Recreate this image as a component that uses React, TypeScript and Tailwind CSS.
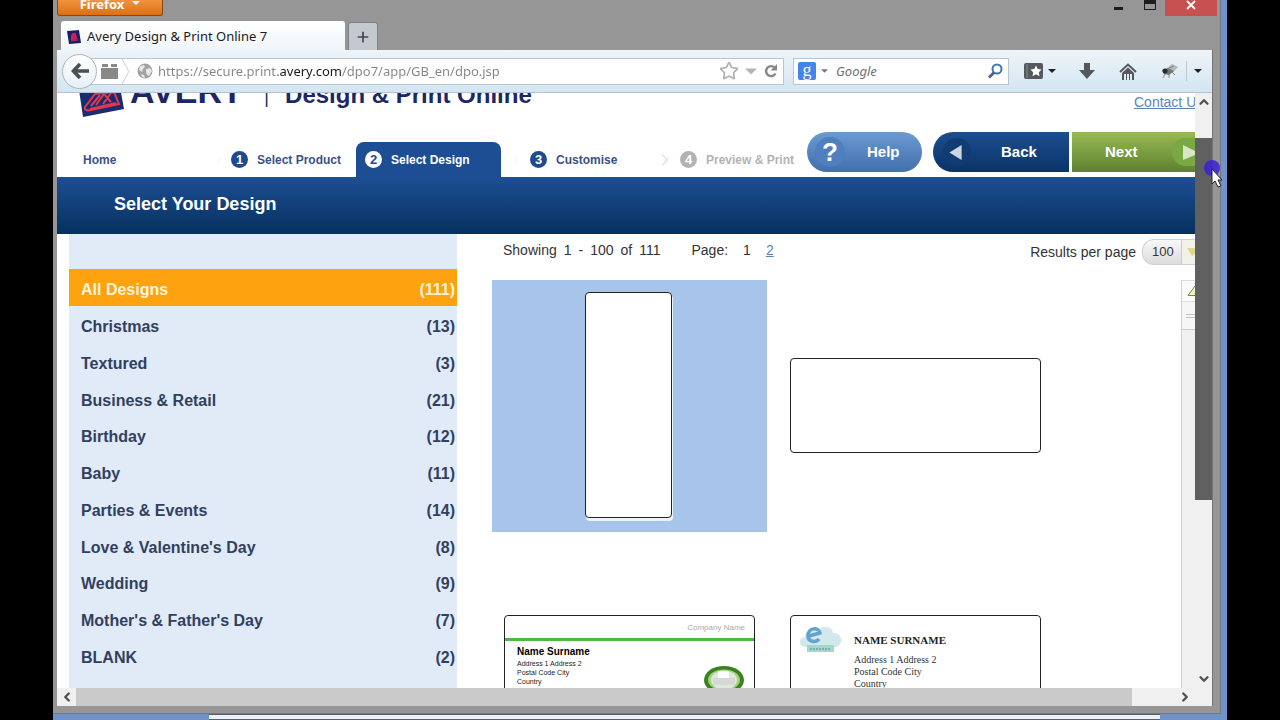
import { ChevronDown, ChevronLeft, ChevronRight, ChevronUp, Plus, Star } from "lucide-react";

const categories = [
  { name: "All Designs", count: 111 },
  { name: "Christmas", count: 13 },
  { name: "Textured", count: 3 },
  { name: "Business & Retail", count: 21 },
  { name: "Birthday", count: 12 },
  { name: "Baby", count: 11 },
  { name: "Parties & Events", count: 14 },
  { name: "Love & Valentine's Day", count: 8 },
  { name: "Wedding", count: 9 },
  { name: "Mother's & Father's Day", count: 7 },
  { name: "BLANK", count: 2 },
];

function Triangle({ className }: { className: string }) {
  return (
    <svg viewBox="0 0 8 4" className={className} fill="currentColor">
      <path d="M0 0h8L4 4z" />
    </svg>
  );
}

function TitleBar() {
  return (
    <div className="-mr-1 flex h-[21px] shrink-0 items-start justify-between">
      <button className="flex h-4 w-[106px] items-end justify-center gap-2 rounded-b-[3px] border border-t-0 border-[#8a4a10] bg-gradient-to-b from-[#ef9440] to-[#dd6f10] pb-[2px] text-white">
        <span className="text-[13px] leading-[18px] font-bold">Firefox</span>
        <Triangle className="mb-2 h-1 w-2" />
      </button>
      <div className="flex items-start">
        <button aria-label="Minimise" className="flex h-4 w-[31px] items-end justify-center pb-[6px]">
          <span className="h-[3px] w-[9px] bg-[#1d1d1d]" />
        </button>
        <button aria-label="Maximise" className="flex h-4 w-[31px] items-start justify-center">
          <span className="h-[10px] w-3 border border-t-4 border-[#1d1d1d]" />
        </button>
        <button aria-label="Close" className="flex h-4 w-[52px] items-start justify-center bg-[#c75050]">
          <svg viewBox="0 0 10 10" className="h-[10px] w-[10px]" stroke="#fff" strokeWidth="1.8">
            <path d="M1 1l8 8M9 1l-8 8" />
          </svg>
        </button>
      </div>
    </div>
  );
}

function TabStrip() {
  return (
    <div className="flex h-[29px] shrink-0 items-end gap-[3px] pl-1">
      <button className="flex h-full w-[284px] items-center gap-[5px] rounded-t-[3px] bg-gradient-to-b from-white to-[#eff5f9] px-[5px] pt-[2px] text-[13px] text-[#1b1b1b]">
        <svg viewBox="0 0 16 16" className="h-4 w-4">
          <path d="M1 2l12-1 2 13-12 1z" fill="#1b1f6b" />
          <path d="M5 11l1-6 3-1 2 6zM5 12l7-1" fill="#c3274f" stroke="#c3274f" />
        </svg>
        Avery Design &amp; Print Online 7
      </button>
      <button aria-label="New tab" className="flex h-7 w-[30px] items-center justify-center rounded-t-[3px] border border-b-0 border-[#7d8187] bg-[#c3c9cf] text-[#3f454c]">
        <Plus size={16} strokeWidth={2.5} />
      </button>
    </div>
  );
}

function Toolbar() {
  return (
    <div className="flex h-[43px] shrink-0 items-center border-b border-[#b6c2cc] bg-gradient-to-b from-[#eef4f8] to-[#d3e6f3] pl-[5px]">
      <button aria-label="Back" className="z-10 flex h-[35px] w-[35px] shrink-0 items-center justify-center rounded-full border border-[#a9b4bd] bg-gradient-to-b from-white to-[#e6f0f7]">
        <svg viewBox="0 0 18 16" className="h-4 w-[18px]" fill="none" stroke="#4b4e52" strokeWidth="3.6">
          <path d="M9 1L2.500 8L9 15M3 8h15" />
        </svg>
      </button>
      <div className="-ml-2 flex h-[27px] min-w-0 flex-1 items-center border border-[#b9c5d0] bg-white pl-[11px]">
        <svg viewBox="0 0 17 15" className="h-[15px] w-[17px] shrink-0" fill="#888">
          <path d="M1 0h6v3H1zM10 0h6v3h-6zM0 4h17v11H0z" />
        </svg>
        <svg viewBox="0 0 9 26" className="ml-[3px] h-[25px] w-[9px] shrink-0" fill="none" stroke="#c9cdd1">
          <path d="M1 0l7 13-7 13" />
        </svg>
        <svg viewBox="0 0 16 16" className="ml-[7px] h-4 w-4 shrink-0">
          <circle cx="8" cy="8" r="7.500" fill="#a2a2a2" />
          <path d="M3 3l4-1 1 2-2 2-1 3-3-2zM9 6l4-1 2 3-3 5-2-1-1-3zM4 11l3 1 1 3-3-1z" fill="#e6e6e6" />
        </svg>
        <input
          aria-label="Address"
          defaultValue="https://secure.print.avery.com/dpo7/app/GB_en/dpo.jsp"
          className="ml-[5px] min-w-0 flex-1 bg-[linear-gradient(90deg,#858585_120px,#1a1a1a_120px,#1a1a1a_184px,#858585_184px)] bg-clip-text pt-[2px] text-[13px] text-transparent outline-none"
        />
        <button aria-label="Bookmark" className="text-[#b0b0b0]">
          <Star size={20} strokeWidth={2} />
        </button>
        <button aria-label="History" className="ml-[6px] text-[#b5b5b5]">
          <Triangle className="h-[7px] w-3" />
        </button>
        <button aria-label="Reload" className="mr-[5px] ml-[7px]">
          <svg viewBox="0 0 14 14" className="h-[14px] w-[14px]" fill="none" stroke="#888" strokeWidth="2.400">
            <path d="M10.500 3.500A5 5 0 1 0 11.500 9.500" />
            <path d="M13 0v6.500H6.500z" fill="#888" stroke="none" />
          </svg>
        </button>
      </div>
      <div className="ml-[9px] flex h-[27px] w-[216px] shrink-0 items-center border border-[#b9c5d0] bg-white pr-[5px] pl-1">
        <span className="flex h-[18px] w-[18px] items-center justify-center rounded-[2px] bg-[#4484ee] pb-[3px] font-['Liberation_Serif',serif] text-[18px] leading-none text-white">g</span>
        <Triangle className="ml-[5px] h-1 w-[7px] text-[#777]" />
        <input aria-label="Search" placeholder="Google" className="ml-2 min-w-0 flex-1 pt-[2px] text-[13px] italic outline-none placeholder:text-[#707070]" />
        <button aria-label="Go">
          <svg viewBox="0 0 16 16" className="h-4 w-4" fill="none">
            <circle cx="10" cy="6" r="4.500" stroke="#3f78ad" strokeWidth="2" />
            <path d="M7 9.500L2 14.500" stroke="#4f6480" strokeWidth="3" />
          </svg>
        </button>
      </div>
      <div className="flex shrink-0 items-center pl-[15px] text-[#54585c]">
        <button aria-label="Bookmarks" className="flex items-center gap-[5px]">
          <svg viewBox="0 0 19 16" className="h-4 w-[19px]">
            <rect width="19" height="16" rx="2" fill="#55595e" />
            <path d="M3 1v14" stroke="#8b8f93" />
            <path d="M12 2.500l1.700 3.600 3.900.5-2.800 2.700.7 3.900-3.500-1.900-3.500 1.900.7-3.900L6.400 6.600l3.900-.5z" fill="#fff" />
          </svg>
          <Triangle className="h-1 w-2 text-[#222]" />
        </button>
        <button aria-label="Downloads" className="ml-[23px]">
          <svg viewBox="0 0 16 16" className="h-4 w-4" fill="currentColor">
            <path d="M5 0h6v7h5l-8 9-8-9h5z" />
          </svg>
        </button>
        <button aria-label="Home page" className="ml-6">
          <svg viewBox="0 0 18 17" className="h-[17px] w-[18px]">
            <path d="M1 9l8-7.500L17 9" fill="none" stroke="#54585c" strokeWidth="2" />
            <path d="M3 10l6-5.500 6 5.500v7h-2v-6h-2v6h-1v-6H8v6H7v-6H5v6H3z" fill="#54585c" />
          </svg>
        </button>
        <button aria-label="Add-on" className="ml-6">
          <svg viewBox="0 0 17 14" className="h-[14px] w-[17px]">
            <path d="M4 6l7-6 6 3-5 5z" fill="#b3b8b6" />
            <path d="M1 6l6-2 6 3-5 4-5-1z" fill="#747875" />
            <circle cx="4" cy="7" r="2.500" fill="#292b2c" />
            <path d="M4 10l-2 4M8 10v4M11 8l3 3M8 4l5-2" stroke="#777" strokeWidth=".8" />
          </svg>
        </button>
        <button aria-label="More" className="mr-[10px] ml-2 flex h-5 items-center border-l border-[#bccad5] pl-[7px]">
          <Triangle className="h-1 w-2 text-[#222]" />
        </button>
      </div>
    </div>
  );
}

function SiteHeader() {
  return (
    <header className="-mt-[17px] flex h-14 items-start pl-5">
      <svg viewBox="0 0 48 41" className="h-[41px] w-12">
        <path d="M0 0h41l6 33-41 8z" fill="#1b2b70" />
        <path d="M8 31l10-13 19-2 5 12-28 6c-4 1-7 0-6-3zM14 30l9-11M19 29l8-11 7 8M13 33l26-6M26 28l8-11" fill="none" stroke="#e2384d" strokeWidth="2" />
      </svg>
      <div className="flex items-baseline pl-[5px] font-bold text-[#1d2768]">
        <span className="text-[34px] leading-[30px]">AVERY</span>
        <span className="ml-[21px] text-lg leading-[30px] font-normal">|</span>
        <span className="ml-4 text-2xl leading-[30px]">Design &amp; Print Online</span>
      </div>
      <a href="#contact" className="mt-4 ml-auto w-[61px] overflow-hidden text-sm leading-5 whitespace-nowrap text-[#5b86b8] underline">
        Contact Us
      </a>
    </header>
  );
}

function StepNumber({ n, className }: { n: number; className: string }) {
  return (
    <span className={`flex h-[17px] w-[17px] items-center justify-center rounded-full text-[13px] leading-none ${className}`}>{n}</span>
  );
}

function Steps() {
  return (
    <div className="flex h-[45px] items-start pl-[26px]">
      <nav className="mt-[10px] flex h-[35px] flex-1 items-center text-xs font-bold whitespace-nowrap text-[#3b5185]">
        <a href="#home" className="w-[130px]">Home</a>
        <ChevronRight size={12} strokeWidth={1} className="text-[#dcdcdc]" />
        <a href="#product" className="ml-[6px] flex w-[125px] items-center gap-[9px]">
          <StepNumber n={1} className="bg-[#1f4b8e] text-white" />
          Select Product
        </a>
        <a href="#design" className="flex h-full w-[145px] items-center gap-[9px] rounded-t-lg bg-[#1d4e93] pl-[9px] text-white">
          <StepNumber n={2} className="bg-white text-[#1d4e93]" />
          Select Design
        </a>
        <ChevronRight size={12} strokeWidth={1} className="ml-[9px] text-[#e4e4e4]" />
        <a href="#customise" className="ml-2 flex w-[129px] items-center gap-[9px]">
          <StepNumber n={3} className="bg-[#1f4b8e] text-white" />
          Customise
        </a>
        <ChevronRight size={20} strokeWidth={1} className="-ml-1 text-[#b5b5b5]" />
        <a href="#preview" className="ml-[5px] flex items-center gap-[9px] text-[#b3b3b3]">
          <StepNumber n={4} className="bg-[#b3b3b3] text-white" />
          Preview &amp; Print
        </a>
      </nav>
      <div className="flex h-10 text-[15px] font-bold text-white">
        <button className="flex w-[115px] items-center rounded-full bg-gradient-to-b from-[#6c9ad0] to-[#426fae] pl-2">
          <span className="flex h-[30px] w-[30px] items-center justify-center rounded-full bg-[#4f7fbf] text-[26px] leading-none">?</span>
          <span className="ml-[22px]">Help</span>
        </button>
        <button className="ml-[11px] flex w-[136px] items-center rounded-l-full bg-gradient-to-b from-[#1c4e90] to-[#093468] pl-[10px]">
          <span className="flex h-7 w-7 items-center justify-center rounded-full bg-[#103c73]">
            <svg viewBox="0 0 13 16" className="mr-2 ml-1 h-[15px] w-[13px]">
              <path d="M0 8L13 0v16z" fill="#ccd5df" />
            </svg>
          </span>
          <span className="ml-[30px]">Back</span>
        </button>
        <button className="ml-[3px] flex w-[123px] items-center justify-between overflow-hidden bg-gradient-to-b from-[#9aba55] to-[#5e8130] pl-[33px]">
          <span>Next</span>
          <span className="flex h-7 w-[23px] items-center justify-end rounded-l-full bg-[#79a943]">
            <svg viewBox="0 0 12 15" className="h-[15px] w-3">
              <path d="M0 0l12 6v4L0 15z" fill="#d9e6c5" />
            </svg>
          </span>
        </button>
      </div>
    </div>
  );
}

function Sidebar() {
  return (
    <aside className="ml-3 flex w-[388px] shrink-0 flex-col bg-[#e0ebf7] pt-[35px]">
      <ul className="flex flex-1 flex-col pb-[15px] text-base font-bold text-[#323f5f]">
        {categories.map((category, i) => (
          <li key={category.name} className="flex flex-1">
            <a
              href="#designs"
              className={`flex flex-1 items-center justify-between pt-[6px] pr-[2px] pl-3 ${i === 0 ? "bg-[#ffa20f] text-[#fdf3dd]" : ""}`}
            >
              <span>{category.name}</span>
              <span>({category.count})</span>
            </a>
          </li>
        ))}
      </ul>
    </aside>
  );
}

function Designs() {
  return (
    <div className="grid grid-cols-[275px_275px] auto-rows-[252px] content-start gap-x-[11px] gap-y-[5px]">
      <div className="flex items-center justify-center bg-[#a7c5eb] pr-[2px] pb-[2px]">
        <div className="h-[226px] w-[87px] rounded-[4px] border border-[#222] bg-white shadow-[1px_3px_0_#eef3fa]" />
      </div>
      <div className="flex items-center justify-center pb-[2px]">
        <div className="h-[95px] w-[251px] rounded-[4px] border border-[#222] bg-white" />
      </div>
      <div className="flex items-start justify-center pt-[78px]">
        <div className="h-[95px] w-[251px] rounded-[4px] border border-[#222] bg-white">
          <p className="h-[22px] pt-[7px] pr-[9px] text-right text-[8px] leading-[10px] text-[#aaa]">Company Name</p>
          <div className="h-[3px] bg-[#4db848]" />
          <div className="flex items-start justify-between pr-[10px] pl-3">
            <div className="text-[7px] leading-[9px] text-[#222]">
              <p className="mb-[1px] pt-[5px] text-[10px] leading-3 font-bold text-black">Name Surname</p>
              <p>Address 1 Address 2</p>
              <p>Postal Code City</p>
              <p>Country</p>
            </div>
            <svg viewBox="0 0 40 28" className="mt-[25px] h-7 w-10">
              <ellipse cx="20" cy="14" rx="20" ry="14" fill="#37841b" />
              <ellipse cx="20" cy="14" rx="16" ry="10.500" fill="#a5d084" />
              <ellipse cx="20" cy="14" rx="13" ry="9.500" fill="#dfe8dc" />
              <path d="M14 5h11v9H14z" fill="#fff" />
              <path d="M9 12h22v7H9z" fill="#d5d9d6" />
            </svg>
          </div>
        </div>
      </div>
      <div className="flex items-start justify-center pt-[78px]">
        <div className="flex h-[95px] w-[251px] items-start rounded-[4px] border border-[#222] bg-white pl-2">
          <svg viewBox="0 0 44 30" className="mt-[9px] h-[30px] w-11">
            <path d="M6 22c-7-1-7-9 0-10C7 3 16 1 20 4c6-5 14-1 14 4 9-1 12 11 3 14z" fill="#d3e8ea" />
            <path d="M8 20h27v7H8z" fill="#a3d6cd" />
            <path d="M11 24h21" stroke="#70b3ac" strokeWidth="2" strokeDasharray="2 1" />
            <path d="M10 11l11-3c-1-6-12-6-12 3 0 6 8 7 11 3" fill="none" stroke="#62a3cf" strokeWidth="3.500" />
          </svg>
          <div className="ml-[11px] pt-[18px] font-['Liberation_Serif',serif] text-[10px] leading-3 text-[#333]">
            <p className="mb-2 text-[11px] leading-3 font-bold text-[#222]">NAME SURNAME</p>
            <p>Address 1 Address 2</p>
            <p>Postal Code City</p>
            <p>Country</p>
          </div>
        </div>
      </div>
    </div>
  );
}

function Results() {
  return (
    <main className="flex min-w-0 flex-1 flex-col pl-[35px]">
      <div className="flex h-[46px] shrink-0 items-start justify-between pt-[5px] pl-[11px] text-sm text-[#333]">
        <div className="flex items-center gap-[7px] leading-[23px]">
          <span>Showing</span>
          <span>1</span>
          <span>-</span>
          <span>100</span>
          <span>of</span>
          <span>111</span>
          <span className="ml-6">Page:</span>
          <span className="ml-2">1</span>
          <a href="#page2" className="ml-2 text-[#5b86b8] underline">2</a>
        </div>
        <div className="flex items-center">
          <label htmlFor="per-page">Results per page</label>
          <div className="ml-[6px] flex h-[26px] w-[53px] items-center overflow-hidden rounded-l-xl border border-r-0 border-[#d0d0d0] bg-gradient-to-b from-[#f8f8f8] to-[#dcdcdc]">
            <select id="per-page" className="w-[38px] appearance-none pl-[9px] text-[13px]">
              <option>100</option>
            </select>
            <span className="flex h-full flex-1 items-center justify-end border-l border-[#ccc] bg-[#f1f1ea] pl-1 text-[#dcd88a]">
              <svg viewBox="0 0 8 8" className="h-2 w-2" fill="currentColor">
                <path d="M0 0h8v6L5 8z" />
              </svg>
            </span>
          </div>
        </div>
      </div>
      <div className="flex min-h-0 flex-1 justify-between">
        <Designs />
        <div className="w-[14px] border-l border-[#d2d2d2] bg-[#f0f0f0]">
          <div className="flex h-[22px] items-center justify-end border-y border-[#ddd] bg-[#fafafa]">
            <svg viewBox="0 0 8 10" className="h-[10px] w-2" fill="#f3f5cf" stroke="#7d8050">
              <path d="M8 0L1 9.500h7" />
            </svg>
          </div>
          <div className="flex h-7 items-center justify-end border-b border-[#ccc] bg-[#f6f6f6]">
            <span className="h-1 w-[9px] border-y border-[#c2c2c2]" />
          </div>
        </div>
      </div>
    </main>
  );
}

function VerticalScrollbar() {
  return (
    <div className="flex w-[17px] shrink-0 flex-col bg-[#f0f0f0] text-[#505050]">
      <button aria-label="Scroll up" className="flex h-[18px] items-center justify-center">
        <ChevronUp size={14} strokeWidth={4} />
      </button>
      <div className="flex-1 pt-[27px]">
        <div className="h-[68%] bg-[#606060]" />
      </div>
      <button aria-label="Scroll down" className="flex h-[18px] items-center justify-center">
        <ChevronDown size={14} strokeWidth={4} />
      </button>
    </div>
  );
}

function HorizontalScrollbar() {
  return (
    <div className="flex h-[18px] shrink-0 bg-[#f0f0f0] pr-[17px] text-[#505050]">
      <button aria-label="Scroll left" className="flex w-[19px] items-center justify-center">
        <ChevronLeft size={14} strokeWidth={4} />
      </button>
      <div className="flex-1 bg-[#cacaca]" />
      <div className="w-[43px]" />
      <button aria-label="Scroll right" className="flex w-5 items-center justify-center">
        <ChevronRight size={14} strokeWidth={4} />
      </button>
    </div>
  );
}

export default function App() {
  return (
    <div className="relative flex h-screen overflow-hidden bg-black px-[53px] font-['Noto_Sans',sans-serif]">
      <div className="flex min-w-0 flex-1 flex-col bg-[#6e93cc] pr-[6px]">
        <div className="flex min-h-0 flex-1 flex-col border-r border-b border-[#77777c] bg-[#969696] pr-[7px] pl-1">
          <TitleBar />
          <TabStrip />
          <div className="mb-[7px] flex min-h-0 flex-1 flex-col border-r border-[#747474]">
            <Toolbar />
            <div className="flex min-h-0 flex-1 font-['Liberation_Sans',sans-serif]">
              <div className="flex min-w-0 flex-1 flex-col overflow-hidden bg-white">
                <SiteHeader />
                <Steps />
                <div className="flex h-[57px] shrink-0 items-center bg-gradient-to-b from-[#1d4f94] to-[#06305f] pb-1 pl-[57px]">
                  <h1 className="text-lg font-bold text-white">Select Your Design</h1>
                </div>
                <div className="flex min-h-0 flex-1">
                  <Sidebar />
                  <Results />
                </div>
              </div>
              <VerticalScrollbar />
            </div>
            <HorizontalScrollbar />
          </div>
        </div>
        <div className="mr-[61px] ml-[156px] h-[6px] shrink-0 border-y border-[#55606e] bg-[#eef3fa]" />
      </div>
      {/* Mouse pointer with its click highlight */}
      <svg viewBox="0 0 24 32" className="absolute top-[157px] right-[53px] h-8 w-6 overflow-visible">
        <circle cx="9" cy="11" r="8" fill="#3b20d8" opacity=".85" />
        <path d="M9 12v15l3-3 3 6 3-1-3-6h4z" fill="#fff" stroke="#222" />
      </svg>
    </div>
  );
}
